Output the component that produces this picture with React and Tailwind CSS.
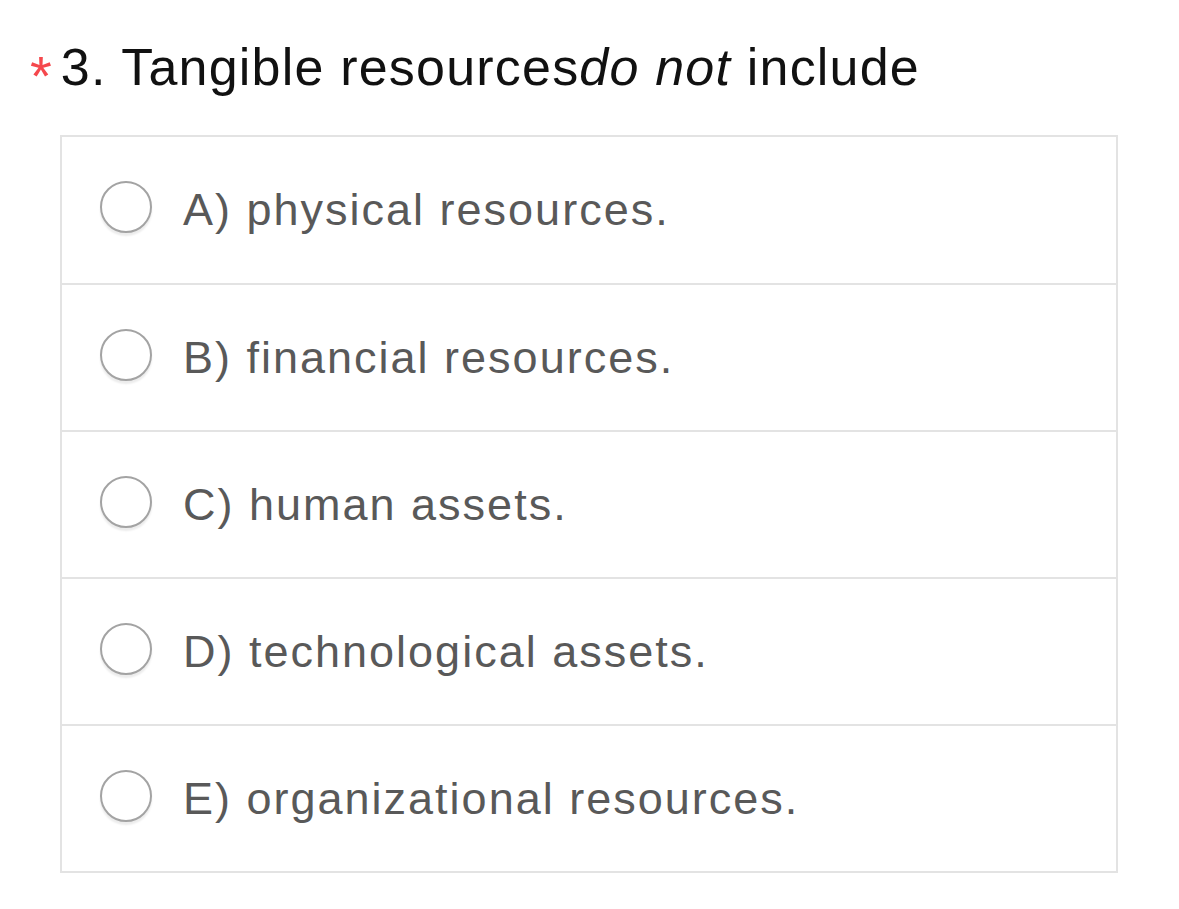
import React from 'react';

const options = [
  'A) physical resources.',
  'B) financial resources.',
  'C) human assets.',
  'D) technological assets.',
  'E) organizational resources.',
];

export default function App() {
  return (
    <div className="min-h-screen bg-white pt-[37px] font-['Liberation_Sans',Arial,sans-serif]">
      <div className="flex h-[60px] items-start pl-[30px] text-[#111]">
        <span className="mr-[9px] mt-[11px] text-[56px] leading-none text-[#f5484d]">*</span>
        <span className="text-[52px] leading-[60px] tracking-[1.2px]">
          3. Tangible resources<i>do not</i> include
        </span>
      </div>
      <div className="ml-[60px] mt-[38px] w-[1058px] border-2 border-[#e3e3e3]">
        {options.map((label, i) => (
          <div
            key={label}
            className={
              'flex items-center pl-[38px] ' +
              (i > 0 ? 'h-[147px] border-t-2 border-[#e3e3e3]' : 'h-[146px]')
            }
          >
            <span className="mb-[6px] h-[52px] w-[52px] shrink-0 rounded-full border-2 border-[#a3a3a3] shadow-[0_3px_2px_rgba(0,0,0,0.08)]" />
            <span className="ml-[31px] text-[45px] tracking-[2px] text-[#595959]">{label}</span>
          </div>
        ))}
      </div>
    </div>
  );
}
